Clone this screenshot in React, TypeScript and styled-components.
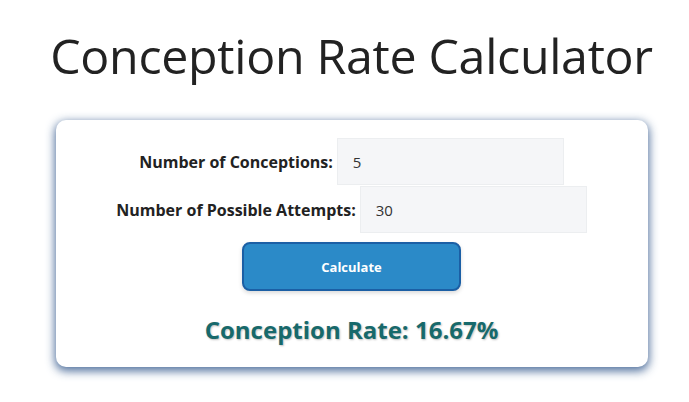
import React, { useState } from 'react';
import styled, { createGlobalStyle } from 'styled-components';

const GlobalStyle = createGlobalStyle`
  body {
    margin: 0;
    background: #ffffff;
    font-family: "Open Sans", "Noto Sans", sans-serif;
  }
`;

const Page = styled.main`
  display: flex;
  flex-direction: column;
  align-items: center;
  padding: 22px 0 30px 14px;
`;

const Title = styled.h1`
  margin: 0 0 32px;
  font-size: 48.3px;
  font-weight: 400;
  color: #222;
  letter-spacing: -0.3px;
`;

const Card = styled.section`
  box-sizing: border-box;
  width: 592px;
  height: 247px;
  padding: 18px 0 0;
  background: #fff;
  border-radius: 10px;
  box-shadow: 0 3px 10px 1px rgba(60, 95, 145, 0.9);
  display: flex;
  flex-direction: column;
  align-items: center;
`;

const Row = styled.div`
  display: flex;
  align-items: center;
  gap: 4px;
  margin-bottom: 1px;
`;

const Label = styled.label`
  font-size: 16px;
  font-weight: 700;
  color: #222;
`;

const Input = styled.input`
  box-sizing: border-box;
  width: 227px;
  height: 47px;
  padding: 0 15px;
  border: 1px solid #eceef0;
  background: #f5f6f8;
  font-family: inherit;
  font-size: 15px;
  color: #333;
  outline: none;
`;

const Button = styled.button`
  box-sizing: border-box;
  width: 219px;
  height: 49px;
  margin-top: 8px;
  border: 2px solid #1b5fa5;
  border-radius: 8px;
  background: #2b8ac8;
  color: #fff;
  font-family: inherit;
  font-size: 13px;
  font-weight: 700;
  box-shadow: 0 2px 4px rgba(0, 0, 0, 0.15);
  cursor: pointer;
`;

const Result = styled.p`
  margin: 22px 0 0;
  font-size: 24px;
  font-weight: 700;
  color: #17696b;
  text-shadow: 1px 1px 2px rgba(0, 0, 0, 0.25);
`;

const App: React.FC = () => {
  const [conceptions, setConceptions] = useState('5');
  const [attempts, setAttempts] = useState('30');
  const [rate, setRate] = useState('16.67');

  const calculate = () => {
    const c = parseFloat(conceptions);
    const a = parseFloat(attempts);
    if (a > 0) setRate(((c / a) * 100).toFixed(2));
  };

  return (
    <>
      <GlobalStyle />
      <Page>
        <Title>Conception Rate Calculator</Title>
        <Card>
          <Row>
            <Label htmlFor="conceptions">Number of Conceptions:</Label>
            <Input id="conceptions" value={conceptions} onChange={(e) => setConceptions(e.target.value)} />
          </Row>
          <Row>
            <Label htmlFor="attempts">Number of Possible Attempts:</Label>
            <Input id="attempts" value={attempts} onChange={(e) => setAttempts(e.target.value)} />
          </Row>
          <Button onClick={calculate}>Calculate</Button>
          <Result>Conception Rate: {rate}%</Result>
        </Card>
      </Page>
    </>
  );
};

export default App;
